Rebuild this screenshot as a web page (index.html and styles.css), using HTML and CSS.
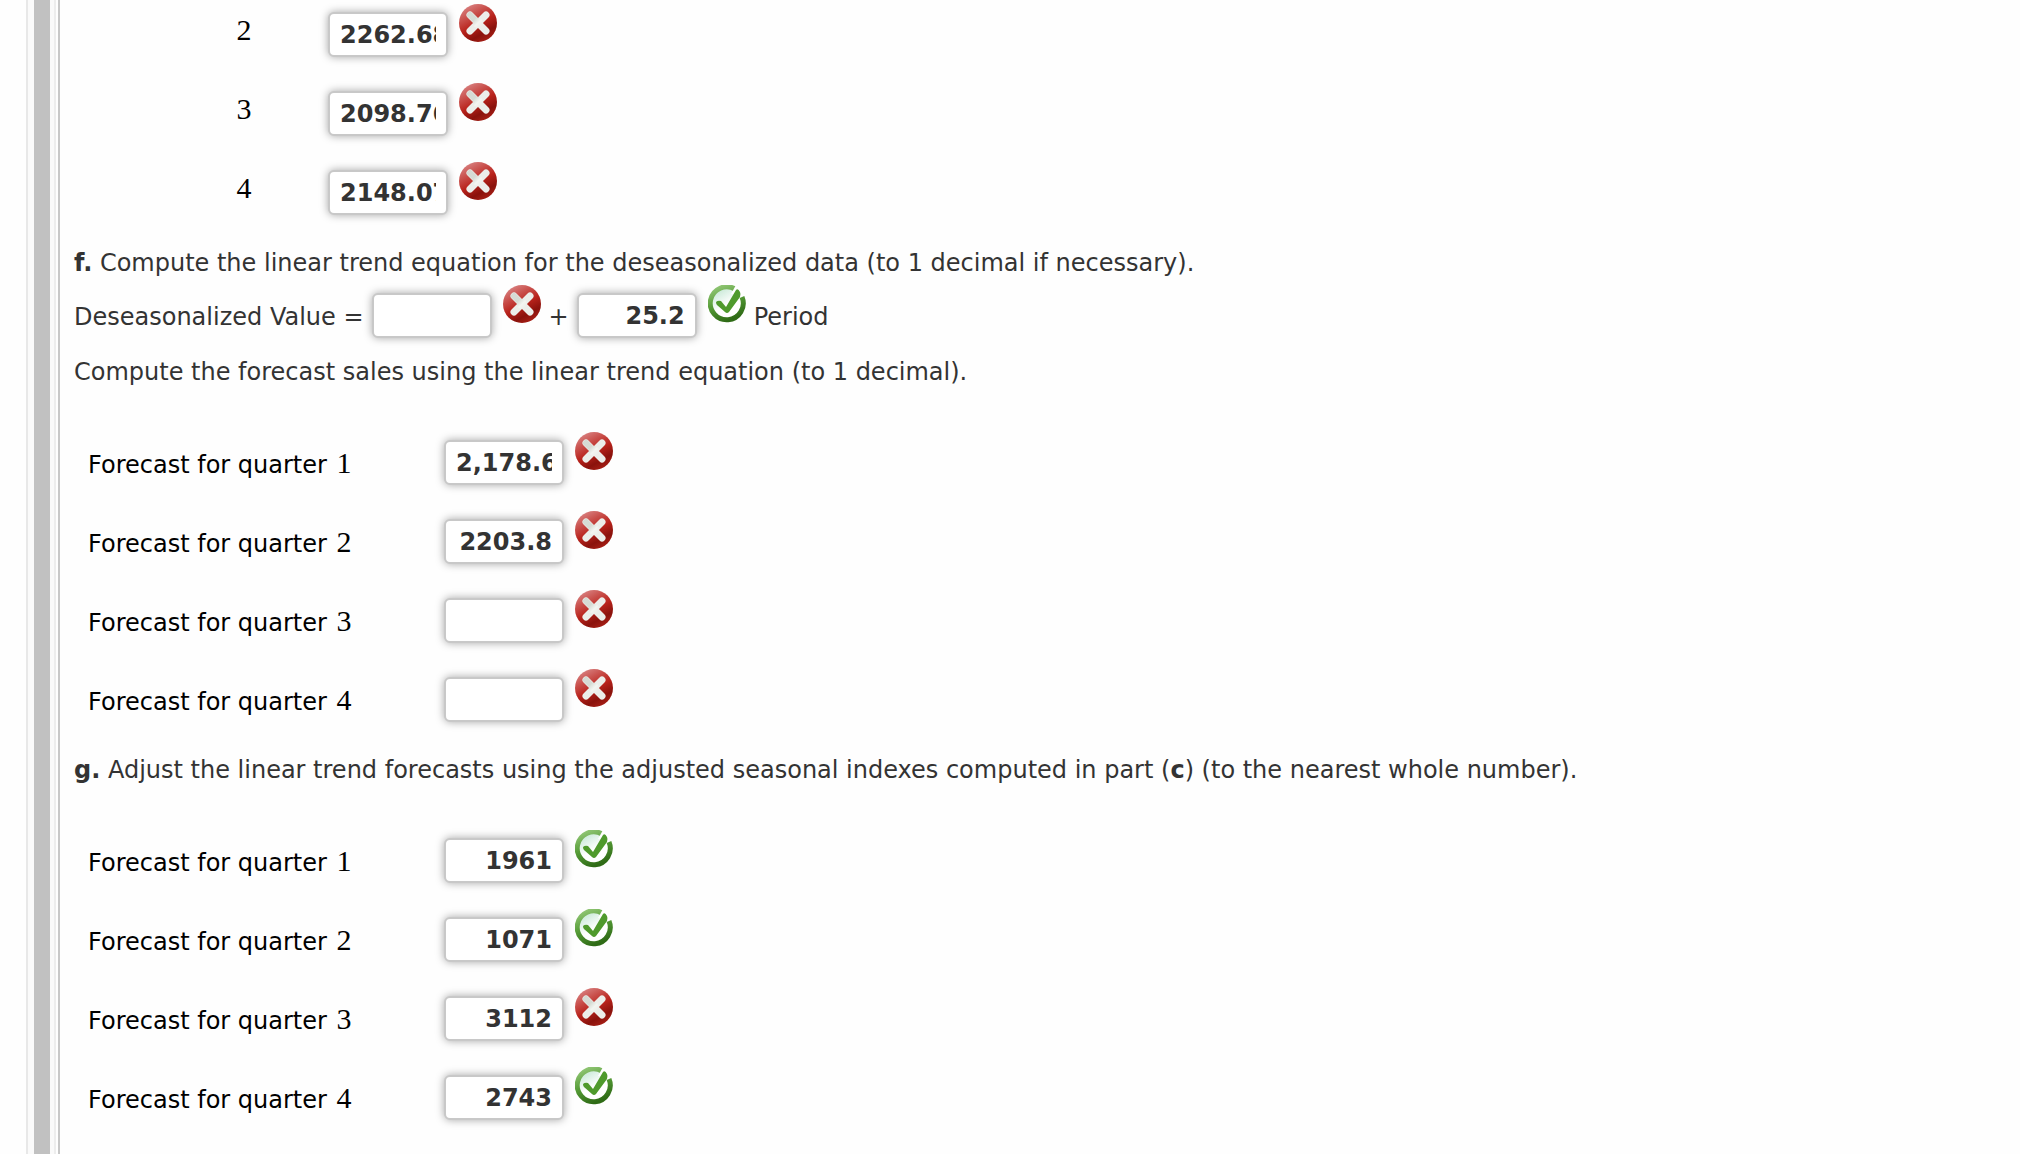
FILE: index.html
```
<!DOCTYPE html>
<html lang="en">
<head>
    <meta charset="UTF-8">
    <meta name="viewport" content="width=device-width, initial-scale=1.0">
    <title>Seasonality and Trend</title>

    <link rel="stylesheet" href="styles.css">
</head>
<body>
    <!-- icon sprites -->
    <svg class="sprites" aria-hidden="true">
        <defs>
            <linearGradient id="red" x1="0.15" y1="0" x2="0.7" y2="1">
                <stop offset="0" stop-color="#dc8c8c"/>
                <stop offset="0.3" stop-color="#c9504c"/>
                <stop offset="0.55" stop-color="#b9231c"/>
                <stop offset="0.8" stop-color="#8a120c"/>
                <stop offset="1" stop-color="#a81f16"/>
            </linearGradient>
            <linearGradient id="cross" x1="0" y1="0" x2="1" y2="1">
                <stop offset="0" stop-color="#cdd3cb"/>
                <stop offset="0.5" stop-color="#f3f5f1"/>
                <stop offset="1" stop-color="#e9ebe6"/>
            </linearGradient>
            <linearGradient id="green" x1="0.2" y1="0" x2="0.6" y2="1">
                <stop offset="0" stop-color="#8fc573"/>
                <stop offset="0.5" stop-color="#549a35"/>
                <stop offset="1" stop-color="#2f6b16"/>
            </linearGradient>
            <linearGradient id="mint" x1="0" y1="0" x2="0.6" y2="1">
                <stop offset="0" stop-color="#b8e2cb"/>
                <stop offset="0.6" stop-color="#ffffff"/>
            </linearGradient>
        </defs>
        <symbol id="wrong" viewBox="0 0 38 38">
            <circle cx="19" cy="19" r="19" fill="url(#red)"/>
            <path d="M11 11l16 16M27 11l-16 16" fill="none" stroke="#eceeea" stroke-width="7" stroke-linecap="round"/>
            <path d="M11 11l8 8" fill="none" stroke="#d6dbd4" stroke-width="6" stroke-linecap="round"/>
            <circle cx="19" cy="19" r="5" fill="url(#cross)"/>
        </symbol>
        <symbol id="right" viewBox="0 0 38 38">
            <circle cx="19" cy="19" r="16" fill="url(#mint)"/>
            <path d="M27 4A16.5 16.5 0 1 0 34 12" fill="none" stroke="url(#green)" stroke-width="5"/>
            <path d="M23 9l5-9 7 6-3 5z" fill="#fff"/>
            <path d="M8 17q2-2 5-1l5 6L28 5q2-2 4 2 1 2 0 5L21 27q-2 2-4 0L9 20q-1-1-1-3z" fill="#4f9a2c"/>
        </symbol>
    </svg>

    <div class="page">
        <div class="gutter"></div>
        <div class="rail"></div>
        <div class="edge"></div>

        <main class="content">
            <table class="answers quarters">
                <tr>
                    <th><label class="num" for="e2">2</label></th>
                    <td><div class="answer"><input type="text" id="e2" value="2262.68"><svg class="mark"><use href="#wrong"/></svg></div></td>
                </tr>
                <tr>
                    <th><label class="num" for="e3">3</label></th>
                    <td><div class="answer"><input type="text" id="e3" value="2098.76"><svg class="mark"><use href="#wrong"/></svg></div></td>
                </tr>
                <tr>
                    <th><label class="num" for="e4">4</label></th>
                    <td><div class="answer"><input type="text" id="e4" value="2148.07"><svg class="mark"><use href="#wrong"/></svg></div></td>
                </tr>
            </table>

            <p class="question"><b>f.</b> Compute the linear trend equation for the deseasonalized data (to 1 decimal if necessary).</p>

            <div class="formula">
                <label for="intercept">Deseasonalized Value =</label>
                <div class="answer"><input type="text" id="intercept" value=""><svg class="mark"><use href="#wrong"/></svg></div>
                <span>+</span>
                <div class="answer"><input type="text" id="slope" value="25.2"><svg class="mark"><use href="#right"/></svg></div>
                <label for="slope">Period</label>
            </div>

            <p class="step">Compute the forecast sales using the linear trend equation (to 1 decimal).</p>

            <table class="answers forecast">
                <tr>
                    <th><label for="f1">Forecast for quarter <span class="num">1</span></label></th>
                    <td><div class="answer"><input type="text" id="f1" value="2,178.6"><svg class="mark"><use href="#wrong"/></svg></div></td>
                </tr>
                <tr>
                    <th><label for="f2">Forecast for quarter <span class="num">2</span></label></th>
                    <td><div class="answer"><input type="text" id="f2" value="2203.8"><svg class="mark"><use href="#wrong"/></svg></div></td>
                </tr>
                <tr>
                    <th><label for="f3">Forecast for quarter <span class="num">3</span></label></th>
                    <td><div class="answer"><input type="text" id="f3" value=""><svg class="mark"><use href="#wrong"/></svg></div></td>
                </tr>
                <tr>
                    <th><label for="f4">Forecast for quarter <span class="num">4</span></label></th>
                    <td><div class="answer"><input type="text" id="f4" value=""><svg class="mark"><use href="#wrong"/></svg></div></td>
                </tr>
            </table>

            <p class="question"><b>g.</b> Adjust the linear trend forecasts using the adjusted seasonal indexes computed in part (<b>c</b>) (to the nearest whole number).</p>

            <table class="answers forecast">
                <tr>
                    <th><label for="g1">Forecast for quarter <span class="num">1</span></label></th>
                    <td><div class="answer"><input type="text" id="g1" value="1961"><svg class="mark"><use href="#right"/></svg></div></td>
                </tr>
                <tr>
                    <th><label for="g2">Forecast for quarter <span class="num">2</span></label></th>
                    <td><div class="answer"><input type="text" id="g2" value="1071"><svg class="mark"><use href="#right"/></svg></div></td>
                </tr>
                <tr>
                    <th><label for="g3">Forecast for quarter <span class="num">3</span></label></th>
                    <td><div class="answer"><input type="text" id="g3" value="3112"><svg class="mark"><use href="#wrong"/></svg></div></td>
                </tr>
                <tr>
                    <th><label for="g4">Forecast for quarter <span class="num">4</span></label></th>
                    <td><div class="answer"><input type="text" id="g4" value="2743"><svg class="mark"><use href="#right"/></svg></div></td>
                </tr>
            </table>
        </main>
    </div>
</body>
</html>
```
FILE: styles.css
```
*{
    margin: 0;
    padding: 0;
    box-sizing: border-box;
}

body{
    background: #fefefe;
    color: #333;
    font-family: Verdana, 'DejaVu Sans', sans-serif;
    font-size: 24px;
    line-height: 30px;
}

.sprites{
    position: absolute;
    width: 0;
    height: 0;
}

.page{
    display: flex;
    min-height: 100vh;
}

/* left frame: thin line, scroll rail, double line */
.gutter{
    width: 34px;
    background: linear-gradient(to right, #fefefe 26px, #e8e8e8 26px, #e8e8e8 28px, #fafafa 28px);
}

.rail{
    width: 16px;
    background: #c1c1c1;
}

.edge{
    width: 10px;
    background: linear-gradient(to right, #fafafa 4px, #ededed 4px, #ededed 6px, #fefefe 6px);
    border-right: 2px solid #c8c8c8;
}

.content{
    flex: 1;
    padding-left: 14px;
}

.answers{
    border-collapse: collapse;
    color: #000;
}

.answers th{
    font-weight: normal;
    text-align: left;
    vertical-align: top;
}

.answers td{
    padding: 4px 0 22px;
}

.quarters{
    margin-left: 86px;
}

.quarters th{
    width: 168px;
    padding-top: 15px;
    text-align: center;
}

.forecast{
    margin-top: 41px;
}

.forecast th{
    width: 370px;
    padding: 20px 0 0 14px;
}

.num{
    font-family: 'Liberation Serif', serif;
    font-size: 30px;
}

.forecast .num{
    margin-left: 2px;
}

.question{
    margin-top: 11px;
}

.formula{
    display: flex;
    align-items: flex-start;
    gap: 8px;
    margin-top: 7px;
}

.formula > label, .formula > span{
    padding-top: 17px;
}

.step{
    margin-top: 19px;
}

.answer{
    display: flex;
    align-items: flex-start;
    gap: 11px;
}

.answer input{
    width: 120px;
    height: 45px;
    margin-top: 8px;
    padding: 0 10px;
    border: 2px solid #c8c8c8;
    border-radius: 6px;
    background: #fff;
    box-shadow: 0 0 8px rgba(0, 0, 0, 0.35);
    color: #333;
    font-family: inherit;
    font-size: 24px;
    font-weight: bold;
    text-align: right;
}

.mark{
    display: block;
    width: 38px;
    height: 38px;
}
```
